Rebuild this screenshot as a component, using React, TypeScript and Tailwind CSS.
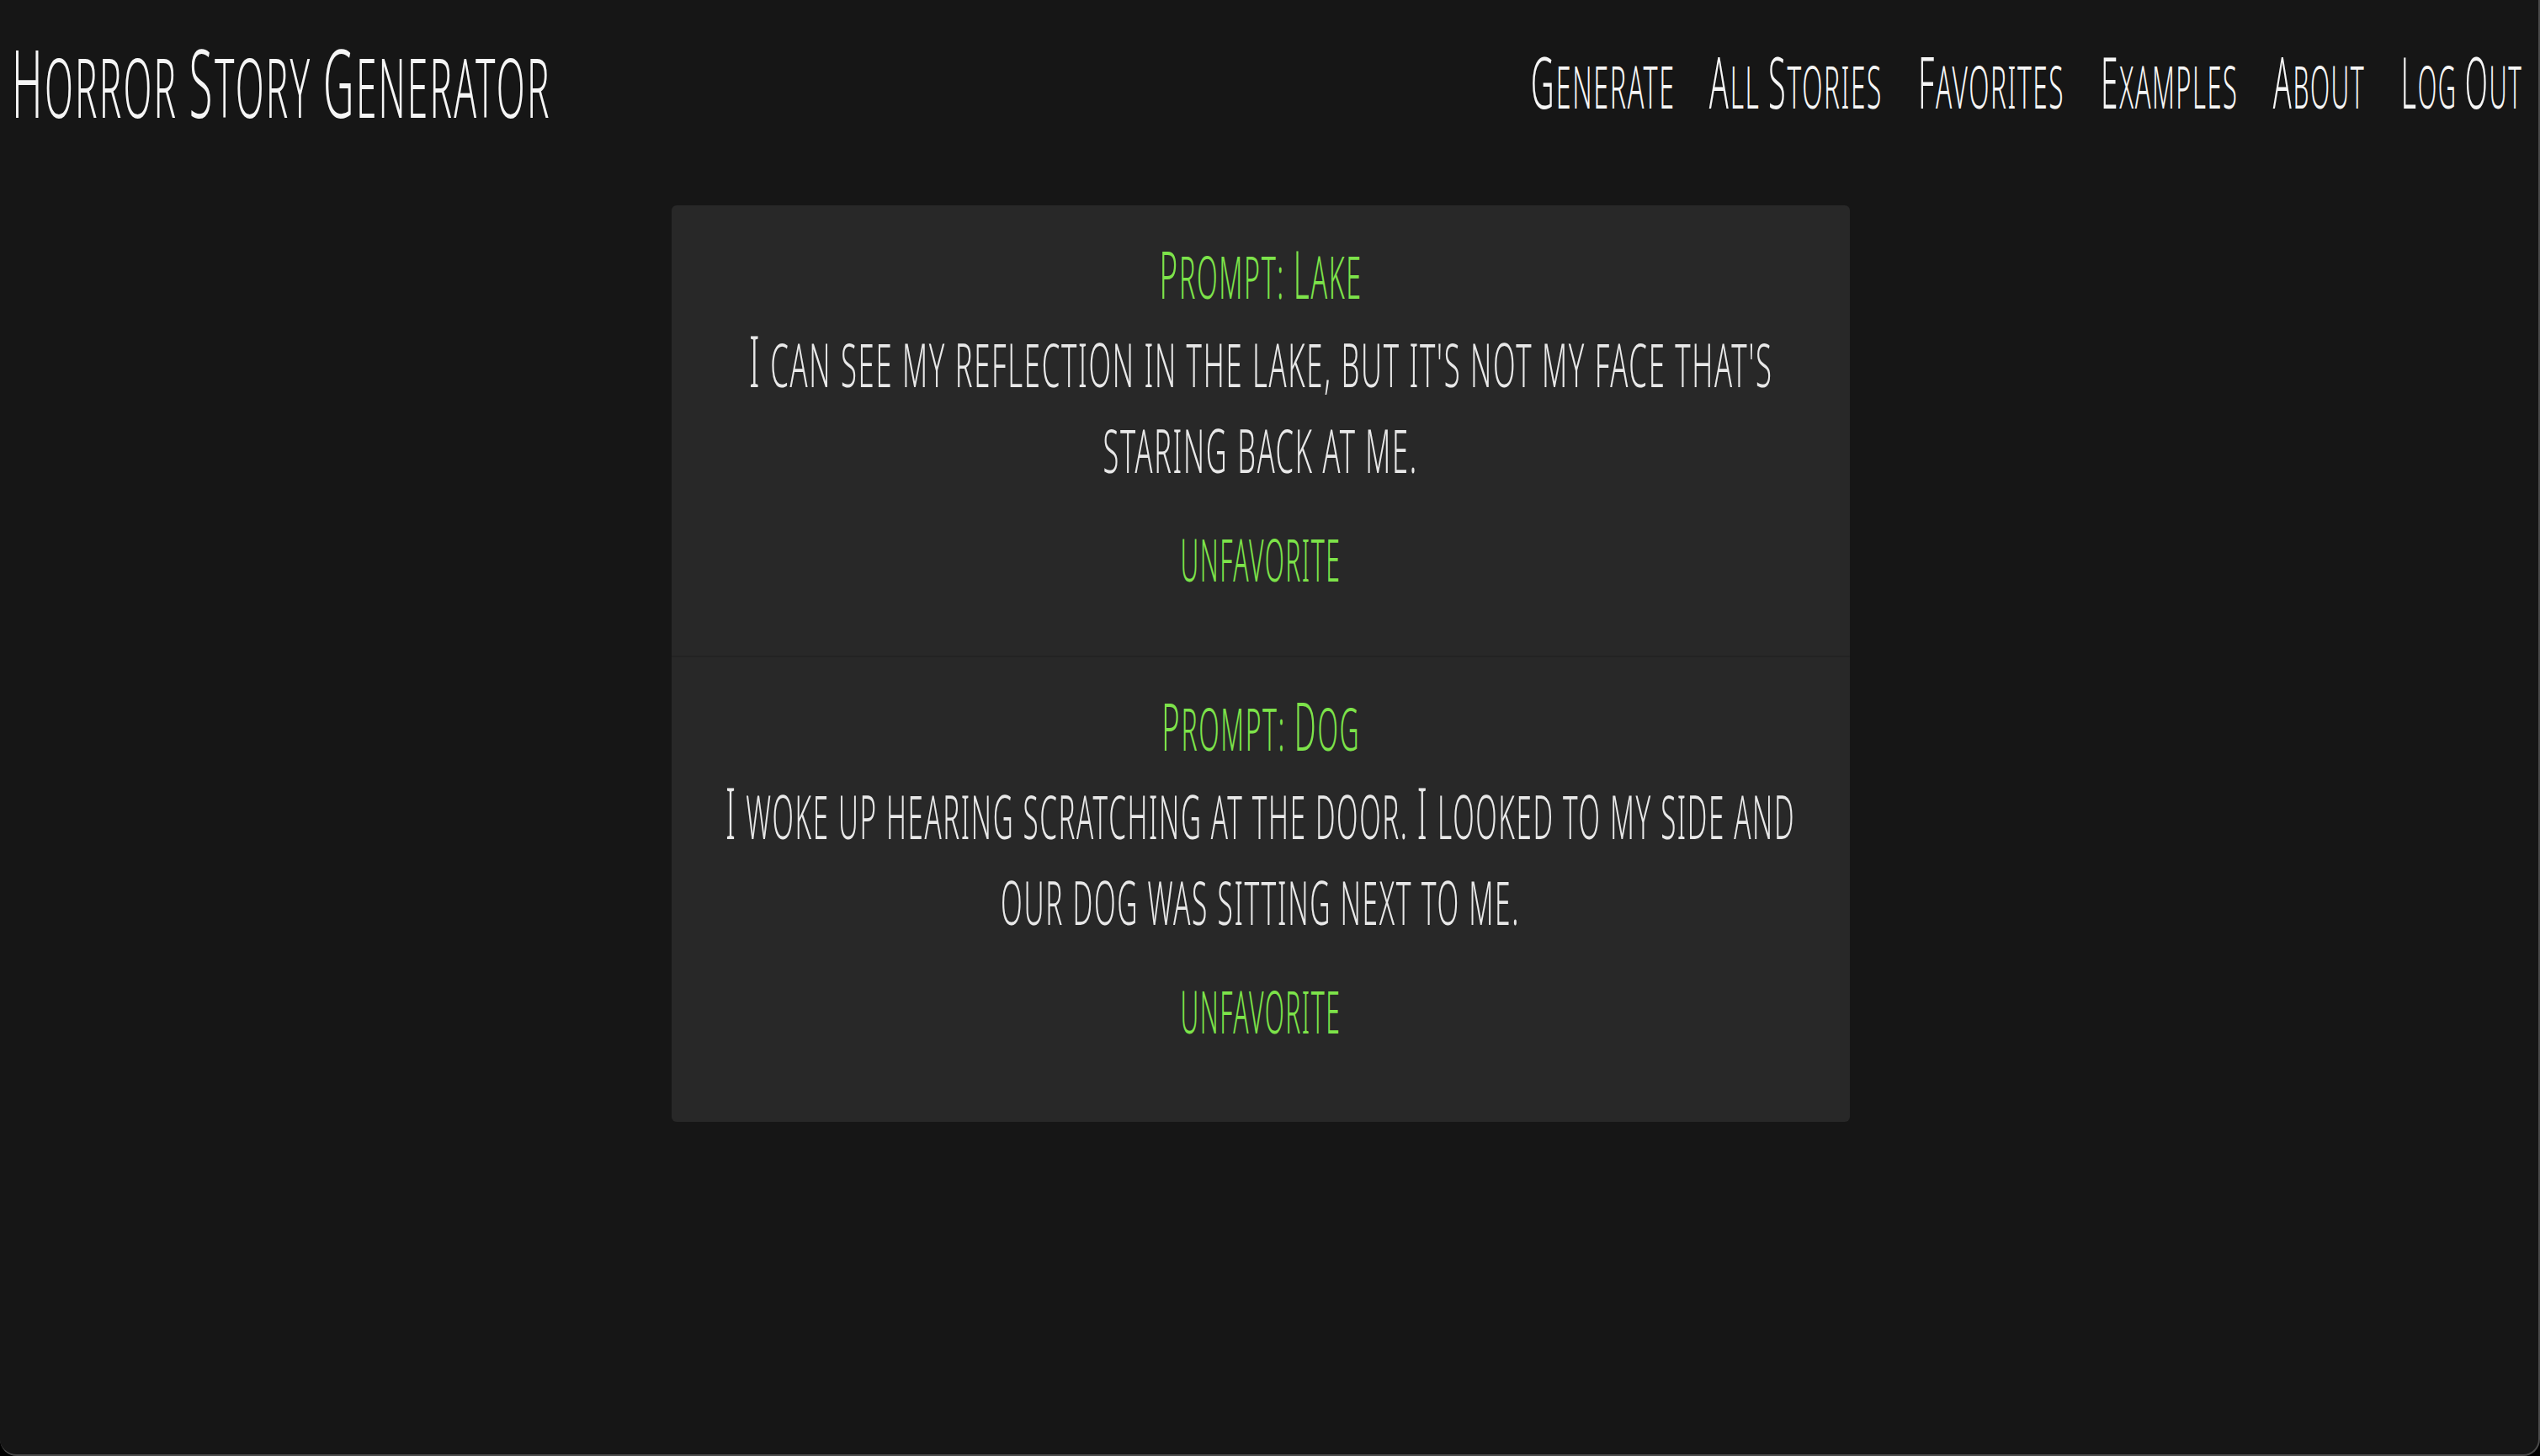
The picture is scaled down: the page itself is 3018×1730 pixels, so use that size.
const fontStack = "font-['Noto_Sans',sans-serif] font-light";

// the original face draws lowercase as small caps, so capitals get a bigger span
function Caps({ text, cap, small }: { text: string; cap: string; small: string }) {
  return (
    <>
      {text.split('').map((ch, i) =>
        ch >= 'A' && ch <= 'Z' ? (
          <span key={i} className={`tracking-[.05em] ${cap}`}>{ch}</span>
        ) : (
          <span key={i} className={`tracking-[.05em] ${small}`}>{ch.toUpperCase()}</span>
        )
      )}
    </>
  );
}

// narrow face isn't installed, squeeze each run to the width it has in the picture
function Line({ text, squeeze, color, cap, small }: { text: string; squeeze: string; color: string; cap: string; small: string }) {
  return (
    <div className={`h-[104px] flex items-center justify-center whitespace-pre ${color}`}>
      <span className={`shrink-0 ${squeeze}`}>
        <Caps text={text} cap={cap} small={small} />
      </span>
    </div>
  );
}

const navLinks = [
  { label: 'Generate', width: 'w-[169px]', squeeze: 'scale-x-[.46]' },
  { label: 'All Stories', width: 'w-[204px]', squeeze: 'scale-x-[.45]' },
  { label: 'Favorites', width: 'w-[175px]', squeeze: 'scale-x-[.451]' },
  { label: 'Examples', width: 'w-[161px]', squeeze: 'scale-x-[.44]' },
  { label: 'About', width: 'w-[109px]', squeeze: 'scale-x-[.43]' },
  { label: 'Log Out', width: 'w-[144px]', squeeze: 'scale-x-[.42]' },
];

type StoryProps = {
  prompt: string;
  promptSqueeze: string;
  lines: { text: string; squeeze: string }[];
  last?: boolean;
};

function Story({ prompt, promptSqueeze, lines, last }: StoryProps) {
  return (
    <div className={last ? 'pt-[28px] pb-[80px]' : 'pt-[28px] pb-[63px] border-b-2 border-[#232323]'}>
      <Line text={`Prompt: ${prompt}`} squeeze={promptSqueeze} color="text-[#7de34a]" cap="text-[80px]" small="text-[70px]" />
      <div className="flex flex-col gap-[2px]">
        {lines.map((line) => (
          <Line key={line.text} text={line.text} squeeze={line.squeeze} color="text-[#e8e8e8]" cap="text-[84px]" small="text-[72px]" />
        ))}
      </div>
      <div className="mt-[26px]">
        <Line text="unfavorite" squeeze="scale-x-[.43]" color="text-[#7de34a]" cap="text-[70px]" small="text-[70px]" />
      </div>
    </div>
  );
}

export default function App() {
  return (
    <div className={`w-[3018px] h-[1730px] bg-black overflow-hidden ${fontStack}`}>
      <div className="h-full bg-[#161616] rounded-b-[20px] border-r-2 border-b-2 border-[#4a4a4a] flex flex-col">

        {/* Header */}
        <header className="h-[194px] flex items-center justify-between pl-[14px] pr-[19px] text-[#f5f5f5] whitespace-pre">
          <div className="w-[636px] flex">
            <h1 className="shrink-0 origin-left scale-x-[.45]">
              <Caps text="Horror Story Generator" cap="text-[112px]" small="text-[98px]" />
            </h1>
          </div>
          <nav className="flex gap-[43px]">
            {navLinks.map((l) => (
              <a key={l.label} className={`flex justify-center ${l.width}`}>
                <span className={`shrink-0 ${l.squeeze}`}>
                  <Caps text={l.label} cap="text-[84px]" small="text-[70px]" />
                </span>
              </a>
            ))}
          </nav>
        </header>

        {/* Favorites */}
        <main className="w-[1400px] mt-[50px] ml-[798px] bg-[#282828] rounded-[6px]">
          <Story
            prompt="Lake"
            promptSqueeze="scale-x-[.46]"
            lines={[
              { text: "I can see my reflection in the lake, but it's not my face that's", squeeze: 'scale-x-[.48]' },
              { text: 'staring back at me.', squeeze: 'scale-x-[.478]' },
            ]}
          />
          <Story
            prompt="Dog"
            promptSqueeze="scale-x-[.455]"
            lines={[
              { text: 'I woke up hearing scratching at the door. I looked to my side and', squeeze: 'scale-x-[.46]' },
              { text: 'our dog was sitting next to me.', squeeze: 'scale-x-[.465]' },
            ]}
            last
          />
        </main>
      </div>
    </div>
  );
}
